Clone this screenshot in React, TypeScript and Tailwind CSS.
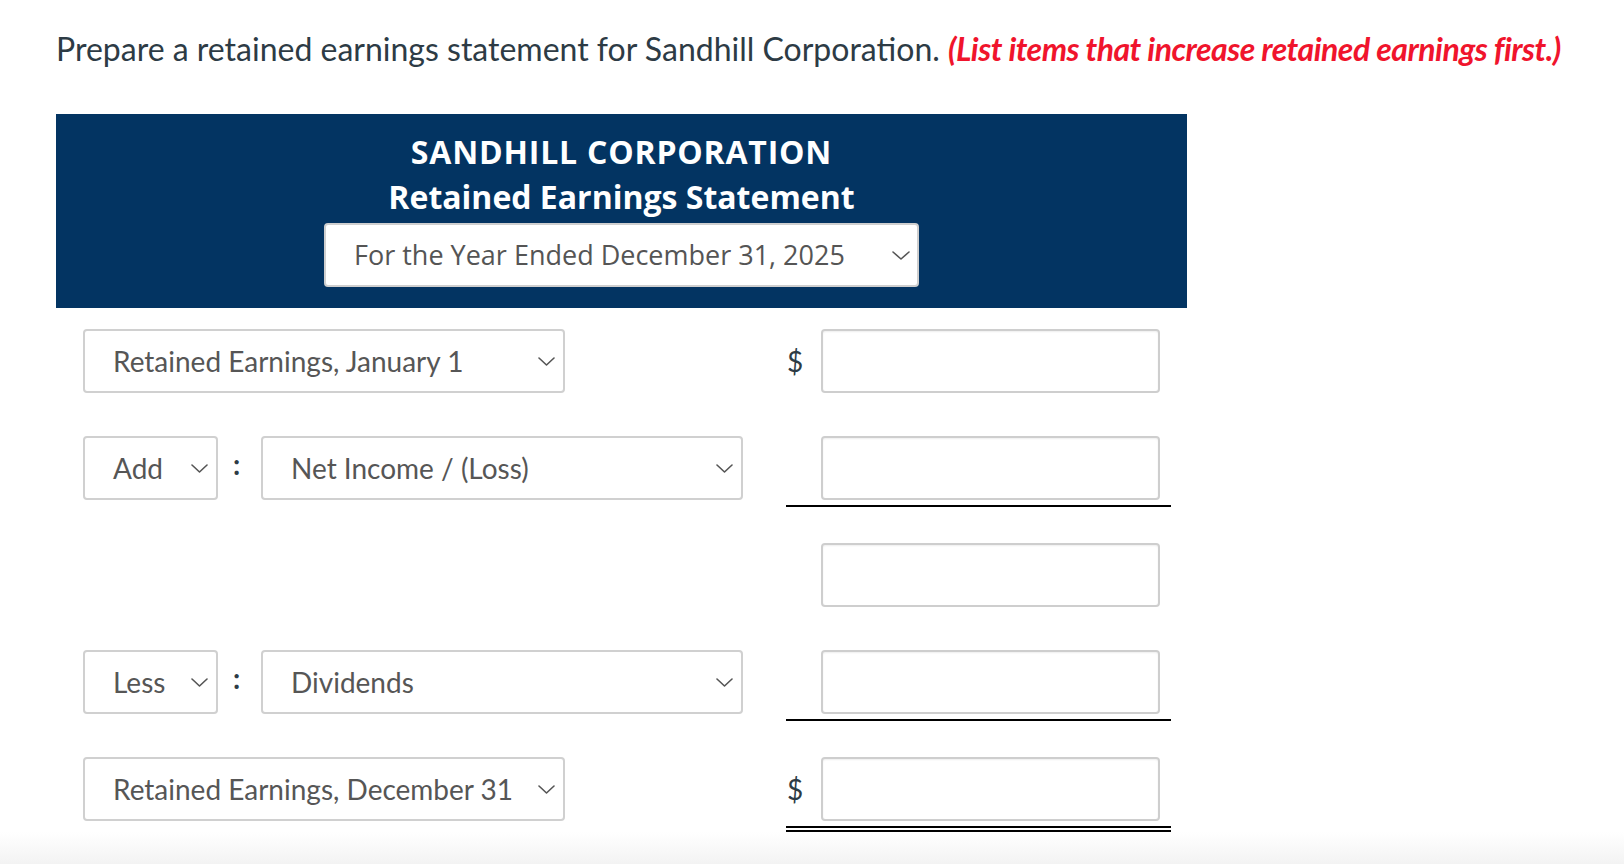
import React from 'react';

const lato = { fontFamily: 'Lato, "Open Sans", Arial, sans-serif' };

function Chevron({ w = 17, h = 9 }: { w?: number; h?: number }) {
  return (
    <svg width={w} height={h} viewBox={`0 0 ${w} ${h}`} fill="none" className="shrink-0">
      <path
        d={`M1 1 L${w / 2} ${h - 1} L${w - 1} 1`}
        stroke="#555"
        strokeWidth="1.6"
        strokeLinecap="round"
        strokeLinejoin="round"
      />
    </svg>
  );
}

function Select({ label, width }: { label: string; width: string }) {
  return (
    <div
      className={`${width} h-16 shrink-0 flex items-center justify-between pl-[28px] pr-[8px] bg-white border-2 border-[#d0d0d0] rounded-[4px] text-[28px] text-[#565656] font-[Lato,sans-serif]`}
    >
      <span className="whitespace-nowrap">{label}</span>
      <Chevron />
    </div>
  );
}

function Amount({ dollar, line }: { dollar?: boolean; line?: 'single' | 'double' }) {
  return (
    <div className="w-[385px] flex flex-col">
      <div className="flex items-center h-16">
        <div className="w-[35px] text-[28px] text-[#2d3b45] pl-[1px] font-[Lato,sans-serif]">
          {dollar ? '$' : ''}
        </div>
        <div className="w-[339px] h-16 bg-white border-2 border-[#cecece] rounded-[4px] shadow-[inset_0_1px_2px_rgba(0,0,0,0.07)]" />
      </div>
      {line === 'single' && <div className="mt-[5px] h-[2px] bg-black" />}
      {line === 'double' && <div className="mt-[5px] h-[6px] border-y-2 border-black" />}
    </div>
  );
}

function Colon() {
  return (
    <div className="w-[43px] text-center text-[28px] font-bold text-[#2d3b45] -mt-[8px] pr-[6px] font-[Lato,sans-serif]">
      :
    </div>
  );
}

export default function App() {
  return (
    <div className="h-[864px] overflow-hidden bg-white flex flex-col" style={lato}>
      <div className="pl-[56px] pt-[30px] flex-1">
        <p className="text-[32px] leading-[38px] text-[#2d3b45] whitespace-nowrap">
          Prepare a retained earnings statement for Sandhill Corporation.{' '}
          <span className="text-[#f0142c] font-bold italic tracking-[-0.5px]">
            (List items that increase retained earnings first.)
          </span>
        </p>

        <div className="mt-[46px] w-[1131px] bg-[#033462] flex flex-col items-center pt-[17px] pb-[21px] text-white font-['Open_Sans',sans-serif]">
          <div className="h-[42px] leading-[42px] text-[32px] font-bold tracking-[0.8px]">SANDHILL CORPORATION</div>
          <div className="mt-[3px] h-[42px] leading-[42px] text-[32px] font-bold">Retained Earnings Statement</div>
          <div className="mt-[5px] w-[595px] h-16 bg-white border-2 border-[#cfcfcf] rounded-[4px] flex items-center justify-between pl-[28px] pr-[7px] text-[27px] text-[#555]">
            <span className="whitespace-nowrap">For the Year Ended December 31, 2025</span>
            <Chevron w={18} h={9} />
          </div>
        </div>

        <div className="mt-[21px] w-[1131px] pl-[27px] flex flex-col">
          <div className="flex h-[107px] items-start">
            <div className="w-[703px] flex items-center h-16">
              <Select label="Retained Earnings, January 1" width="w-[482px]" />
            </div>
            <Amount dollar />
          </div>

          <div className="flex h-[107px] items-start">
            <div className="w-[703px] flex items-center h-16">
              <Select label="Add" width="w-[135px]" />
              <Colon />
              <Select label="Net Income / (Loss)" width="w-[482px]" />
            </div>
            <Amount line="single" />
          </div>

          <div className="flex h-[107px] items-start">
            <div className="w-[703px] h-16" />
            <Amount />
          </div>

          <div className="flex h-[107px] items-start">
            <div className="w-[703px] flex items-center h-16">
              <Select label="Less" width="w-[135px]" />
              <Colon />
              <Select label="Dividends" width="w-[482px]" />
            </div>
            <Amount line="single" />
          </div>

          <div className="flex items-start">
            <div className="w-[703px] flex items-center h-16">
              <Select label="Retained Earnings, December 31" width="w-[482px]" />
            </div>
            <Amount dollar line="double" />
          </div>
        </div>
      </div>
      <div className="h-[32px] bg-gradient-to-b from-white to-[#f3f3f3]" />
    </div>
  );
}
